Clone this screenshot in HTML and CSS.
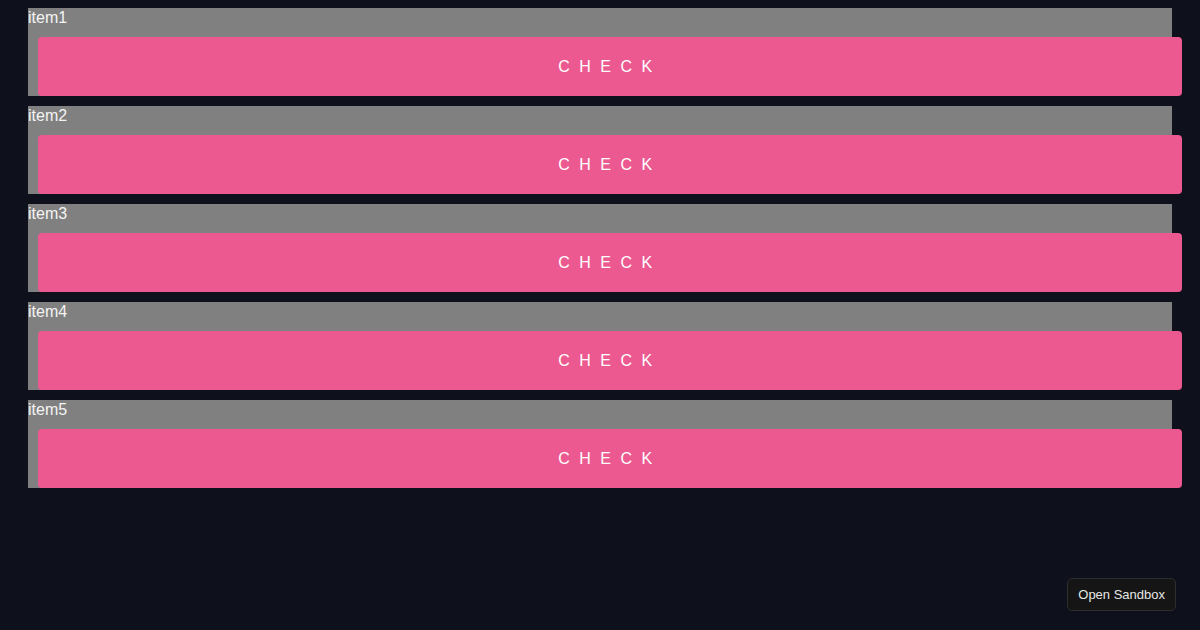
FILE: index.html
```html
<!DOCTYPE html>
<html>
<head>
<meta charset="utf-8">
<link rel="stylesheet" href="styles.css">
</head>
<body>
<div class="list">
  <div class="item"><div class="label">item1</div><button class="check">CHECK</button></div>
  <div class="item"><div class="label">item2</div><button class="check">CHECK</button></div>
  <div class="item"><div class="label">item3</div><button class="check">CHECK</button></div>
  <div class="item"><div class="label">item4</div><button class="check">CHECK</button></div>
  <div class="item"><div class="label">item5</div><button class="check">CHECK</button></div>
</div>
<button class="sandbox">Open Sandbox</button>
</body>
</html>
```
FILE: styles.css
```css
html, body {
  background: #0e111c;
}
body {
  margin: 8px 18px 8px 28px;
  font-family: "Liberation Sans", Arial, sans-serif;
  color: #f2f2f2;
}
.list {
  display: flex;
  flex-direction: column;
  gap: 10px;
}
.item {
  background: #808080;
  display: flex;
  flex-direction: column;
  align-items: stretch;
  height: 88px;
  margin-right: 10px;
}
.label {
  font-size: 16px;
  line-height: 19px;
  color: #f4f4f4;
}
.check {
  box-sizing: border-box;
  margin: 10px -10px 0 10px;
  height: 59px;
  flex: none;
  background: #ec5990;
  border: none;
  border-radius: 4px;
  color: #ffffff;
  font-family: "Liberation Sans", Arial, sans-serif;
  font-size: 16px;
  line-height: 17px;
  letter-spacing: 9.5px;
  padding: 0;
  text-transform: uppercase;
}
.sandbox {
  position: fixed;
  right: 24px;
  bottom: 19px;
  height: 33px;
  padding: 0 10px;
  background: #151515;
  border: 1px solid #2e2e2e;
  border-radius: 5px;
  color: #e6e6e6;
  font-family: "Liberation Sans", Arial, sans-serif;
  font-size: 13px;
}
```
